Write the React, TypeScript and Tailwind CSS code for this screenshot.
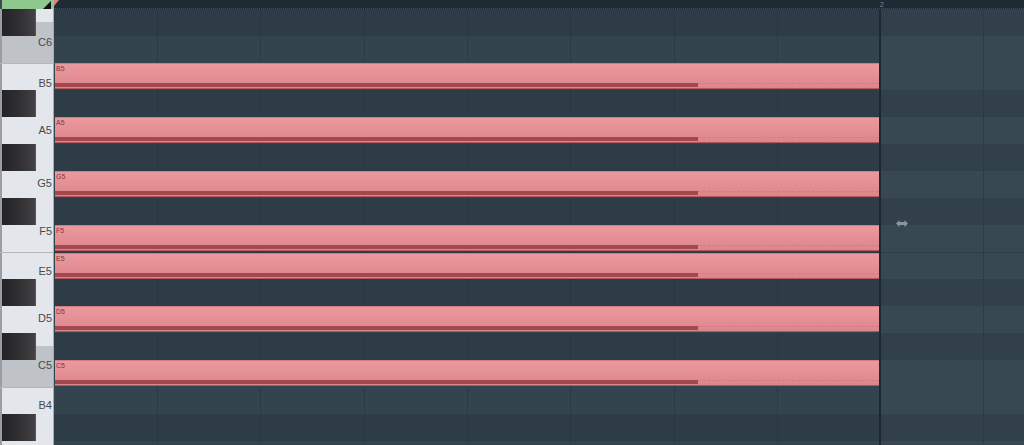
import React from 'react';

type Row = { name: string; black: boolean; label?: string; pad?: string; note?: boolean };

// top to bottom, one row per semitone (27px each)
const rows: Row[] = [
  { name: 'C#6', black: true },
  { name: 'C6', black: false, label: 'C6', pad: 'pt-[1px]' },
  { name: 'B5', black: false, label: 'B5', pad: 'pt-[14px]', note: true },
  { name: 'A#5', black: true },
  { name: 'A5', black: false, label: 'A5', pad: 'pt-[8px]', note: true },
  { name: 'G#5', black: true },
  { name: 'G5', black: false, label: 'G5', pad: 'pt-[7px]', note: true },
  { name: 'F#5', black: true },
  { name: 'F5', black: false, label: 'F5', pad: 'pt-[1px]', note: true },
  { name: 'E5', black: false, label: 'E5', pad: 'pt-[13px]', note: true },
  { name: 'D#5', black: true },
  { name: 'D5', black: false, label: 'D5', pad: 'pt-[7px]', note: true },
  { name: 'C#5', black: true },
  { name: 'C5', black: false, label: 'C5', pad: 'pt-0', note: true },
  { name: 'B4', black: false, label: 'B4', pad: 'pt-[12px]' },
  { name: 'A#4', black: true },
  { name: 'A4', black: false },
];

const beatLines = [103, 206, 310, 413, 516, 620, 723, 929];

function Key({ row, next }: { row: Row; next?: Row }) {
  const isC = row.name.startsWith('C') && !row.black;
  const topBorder = row.name.startsWith('B') || row.name.startsWith('E');
  const nextIsC = next && next.name.startsWith('C') && !next.black;

  if (row.black) {
    return (
      <div className="flex h-[27px]">
        <div className="w-[2px] bg-[#9a9ea4]" />
        <div className="w-[34px] bg-gradient-to-r from-[#242426] via-[#2f2e30] to-[#434144] border-r border-[#55555a]" />
        <div className="flex w-[17px] flex-col">
          <div className="flex-1 bg-[#e3e6eb]" />
          {nextIsC && <div className="h-[14px] bg-[#bfc2c7]" />}
        </div>
        <div className="w-[1px] bg-[#a7acb3]" />
      </div>
    );
  }

  return (
    <div className={`flex h-[27px] ${topBorder ? 'border-t border-[#b3b7bd]' : ''}`}>
      <div className="w-[2px] bg-[#9a9ea4]" />
      <div
        className={`flex w-[51px] items-start justify-end pr-[1px] ${row.pad ?? ''} ${isC ? 'bg-[#bfc2c7]' : 'bg-[#e3e6eb]'}`}
      >
        {row.label && (
          <span className="font-['Liberation_Sans',Arial,sans-serif] text-[11px] leading-none text-[#464b51]">
            {row.label}
          </span>
        )}
      </div>
      <div className="w-[1px] bg-[#a7acb3]" />
    </div>
  );
}

function Note({ label }: { label: string }) {
  return (
    <div className="relative z-10 ml-[1px] h-[26px] w-[824px] border-t border-[#d17d82] border-b border-b-[#b0565c] bg-gradient-to-b from-[#ec999e] to-[#dc868c]">
      <span className="absolute left-[1px] top-[1px] font-['Liberation_Sans',Arial,sans-serif] text-[7px] leading-none text-[#7e3a40]">
        {label}
      </span>
      <div className="absolute bottom-[1px] left-0 h-[4px] w-[643px] bg-[#a2484e]" />
      <div className="absolute bottom-[4px] left-[643px] right-0 border-t border-dashed border-[#d07d83]" />
    </div>
  );
}

export default function App() {
  return (
    <div className="flex h-[445px] w-[1024px] flex-col overflow-hidden bg-[#2d3c46]">
      {/* header */}
      <div className="flex h-[9px] shrink-0">
        <div className="w-[2px] bg-[#3a4a4f]" />
        <div className="relative w-[52px] bg-[#8fc88f]">
          <svg className="absolute right-[3px] top-[1px]" width="8" height="8" viewBox="0 0 8 8">
            <polygon points="8,0 8,8 0,8" fill="#101418" />
          </svg>
        </div>
        <div className="relative flex-1 border-b border-dotted border-[#3d4c55] bg-[#1f2b33]">
          <svg className="absolute left-0 top-0" width="5" height="6" viewBox="0 0 5 6">
            <polygon points="0,0 5,0 0,6" fill="#e07f84" />
          </svg>
          <span className="absolute left-[826px] top-[1px] font-['Liberation_Sans',Arial,sans-serif] text-[7px] leading-none text-[#7d8b94]">
            2
          </span>
        </div>
      </div>

      <div className="flex flex-1">
        {/* keyboard */}
        <div className="flex w-[54px] shrink-0 flex-col">
          {rows.map((r, i) => (
            <Key key={r.name} row={r} next={rows[i + 1]} />
          ))}
        </div>

        {/* grid */}
        <div className="relative flex-1">
          <div className="flex flex-col">
            {rows.map((r) => (
              <div
                key={r.name}
                className={`h-[27px] ${r.black ? 'bg-[#2d3c47]' : 'bg-[#34444e]'} ${
                  r.name === 'E5' ? 'border-t border-[#2a3841]' : ''
                }`}
              >
                {r.note && r.label && <Note label={r.label} />}
              </div>
            ))}
          </div>

          {/* second bar is shaded a touch lighter */}
          <div className="pointer-events-none absolute inset-y-0 left-[826px] right-0 bg-white/[0.025]" />

          {beatLines.map((x) => (
            <div
              key={x}
              className="pointer-events-none absolute inset-y-0 w-0 border-l border-dotted border-[#25323b]"
              style={{ left: x }}
            />
          ))}
          <div className="pointer-events-none absolute inset-y-0 left-[825px] w-[2px] bg-[#1d2930]" />

          {/* resize cursor */}
          <svg className="absolute left-[842px] top-[211px]" width="12" height="7" viewBox="0 0 12 7">
            <polygon points="0,3.5 3.5,0 3.5,2 8.5,2 8.5,0 12,3.5 8.5,7 8.5,5 3.5,5 3.5,7" fill="#8a969d" />
          </svg>
        </div>
      </div>
    </div>
  );
}
